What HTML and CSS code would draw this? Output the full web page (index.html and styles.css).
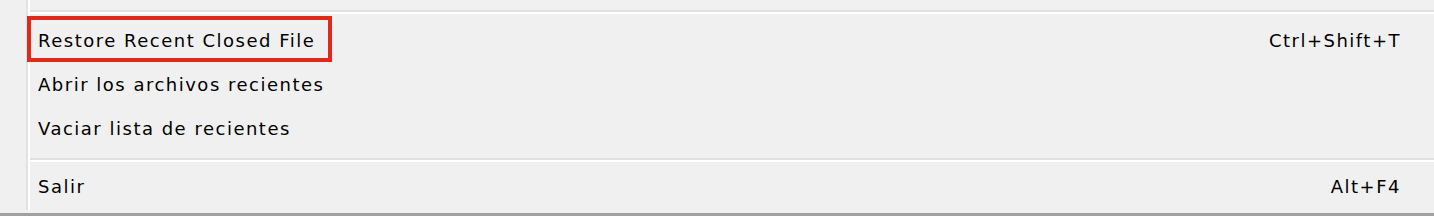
FILE: index.html
```html
<!DOCTYPE html>
<html>
<head>
<meta charset="utf-8">
<link rel="stylesheet" href="styles.css">
</head>
<body>
<div class="frame">
  <div class="menu">
    <div class="gutter"></div>
    <div class="items">
      <div class="prev"></div>
      <div class="sep"></div>
      <div class="group">
        <div class="item"><span class="label">Restore Recent Closed File</span><span class="key">Ctrl+Shift+T</span></div>
        <div class="item"><span class="label">Abrir los archivos recientes</span><span class="key"></span></div>
        <div class="item"><span class="label">Vaciar lista de recientes</span><span class="key"></span></div>
      </div>
      <div class="sep"></div>
      <div class="item exit"><span class="label">Salir</span><span class="key">Alt+F4</span></div>
    </div>
    <div class="highlight"></div>
  </div>
</div>
</body>
</html>
```
FILE: styles.css
```css
html, body {
  margin: 0;
  padding: 0;
  background: #f0f0f0;
}
.frame {
  width: 1434px;
  height: 213px;
  border-bottom: 3px solid #a0a0a0;
  background: #f0f0f0;
  font-family: "DejaVu Sans", Tahoma, sans-serif;
  font-size: 18px;
  letter-spacing: 1.5px;
  color: #000;
}
.menu {
  position: relative;
  display: flex;
  height: 210px;
}
.gutter {
  width: 26px;
  flex: none;
  border-right: 2px solid #e2e2e2;
  box-shadow: 2px 0 0 #ffffff;
}
.items {
  flex: 1;
  display: flex;
  flex-direction: column;
  padding-left: 2px;
}
.prev {
  height: 10px;
}
.sep {
  height: 2px;
  background: #e0e0e0;
  border-bottom: 2px solid #ffffff;
}
.group {
  padding: 4px 0 8px;
}
.item {
  height: 44px;
  display: flex;
  align-items: center;
  justify-content: space-between;
  padding-left: 8px;
  padding-right: 33px;
  white-space: nowrap;
}
.item.exit {
  height: 48px;
}
.highlight {
  position: absolute;
  left: 27px;
  top: 16px;
  width: 297px;
  height: 38px;
  border: 4px solid #e0281b;
}
```
